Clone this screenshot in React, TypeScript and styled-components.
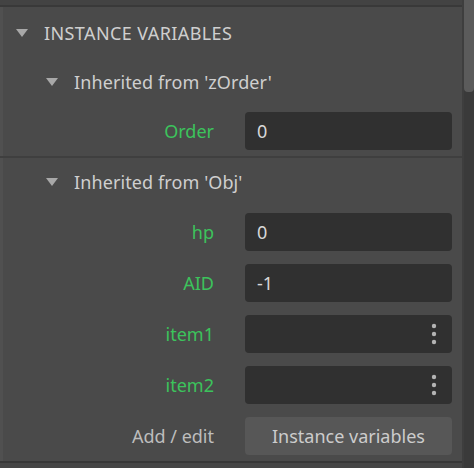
import React from "react";
import styled, { createGlobalStyle } from "styled-components";

const Global = createGlobalStyle`
  html, body { margin: 0; padding: 0; background: #484848; }
  body { font-family: "Noto Sans", "Open Sans", sans-serif; }
  * { box-sizing: border-box; }
`;

const Frame = styled.div`
  width: 474px;
  height: 468px;
  display: flex;
  overflow: hidden;
  background: #484848;
`;

const Main = styled.div`
  flex: 1;
  display: flex;
  flex-direction: column;
  border-right: 2px solid #3e3e3e;
`;

const TopStrip = styled.div`
  height: 8px;
  background: #434343;
  border-bottom: 2px solid #393939;
`;

const Panel = styled.div`
  flex: 1;
  display: flex;
  flex-direction: column;
  background: #4a4a4a;
  border-left: 3px solid #505050;
`;

const Footer = styled.div`
  height: 8px;
  background: #464646;
  border-top: 2px solid #383838;
`;

const Scrollbar = styled.div`
  width: 10px;
  display: flex;
  flex-direction: column;
  background: #3a3a3a;
`;

const Thumb = styled.div`
  height: 92px;
  background: #5b5b5b;
  border-radius: 0 0 4px 4px;
`;

const Header = styled.div<{ $indent: number; $caps?: boolean; $h: number }>`
  display: flex;
  align-items: center;
  height: ${(p) => p.$h}px;
  padding-left: ${(p) => p.$indent}px;
  gap: 16px;
  color: #cfcfcf;
  font-size: 18px;
  letter-spacing: ${(p) => (p.$caps ? "0.4px" : "0.1px")};
`;

const Tri = styled.span`
  width: 0;
  height: 0;
  border-left: 6px solid transparent;
  border-right: 6px solid transparent;
  border-top: 8px solid #a8a8a8;
`;

const Row = styled.div`
  display: grid;
  grid-template-columns: 211px 207px;
  column-gap: 31px;
  align-items: center;
  height: 51px;
`;

const Label = styled.span<{ $muted?: boolean }>`
  text-align: right;
  font-size: 18px;
  color: ${(p) => (p.$muted ? "#bdbdbd" : "#3cc35c")};
`;

const Field = styled.div`
  height: 38px;
  border-radius: 4px;
  background: #303030;
  display: flex;
  align-items: center;
  justify-content: space-between;
  padding: 0 15px 0 12px;
  color: #d8d8d8;
  font-size: 18px;
`;

const Button = styled.div`
  height: 38px;
  border-radius: 4px;
  background: #575757;
  display: flex;
  align-items: center;
  justify-content: center;
  color: #cccccc;
  font-size: 18px;
`;

const Divider = styled.div`
  height: 2px;
  background: #3f3f3f;
  margin-left: -3px;
`;

const Group = styled.div`
  display: flex;
  flex-direction: column;
`;

const Dots = () => (
  <svg width="6" height="24" viewBox="0 0 6 24">
    <circle cx="3" cy="4" r="2.2" fill="#b4b4b4" />
    <circle cx="3" cy="12" r="2.2" fill="#b4b4b4" />
    <circle cx="3" cy="20" r="2.2" fill="#b4b4b4" />
  </svg>
);

type Var = { name: string; value?: string; menu?: boolean };

const VarRow = ({ v }: { v: Var }) => (
  <Row>
    <Label>{v.name}</Label>
    <Field>
      <span>{v.value ?? ""}</span>
      {v.menu && <Dots />}
    </Field>
  </Row>
);

export default function App() {
  const objVars: Var[] = [
    { name: "hp", value: "0" },
    { name: "AID", value: "-1" },
    { name: "item1", menu: true },
    { name: "item2", menu: true },
  ];
  return (
    <>
      <Global />
      <Frame>
        <Main>
          <TopStrip />
          <Panel>
            <Header $indent={13} $caps $h={52}>
              <Tri />
              INSTANCE VARIABLES
            </Header>
            <Group>
              <Header $indent={43} $h={46}>
                <Tri />
                Inherited from 'zOrder'
              </Header>
              <VarRow v={{ name: "Order", value: "0" }} />
            </Group>
            <Divider />
            <Group>
              <Header $indent={43} $h={48}>
                <Tri />
                Inherited from 'Obj'
              </Header>
              {objVars.map((v) => (
                <VarRow key={v.name} v={v} />
              ))}
              <Row>
                <Label $muted>Add / edit</Label>
                <Button>Instance variables</Button>
              </Row>
            </Group>
          </Panel>
          <Footer />
        </Main>
        <Scrollbar>
          <Thumb />
        </Scrollbar>
      </Frame>
    </>
  );
}
